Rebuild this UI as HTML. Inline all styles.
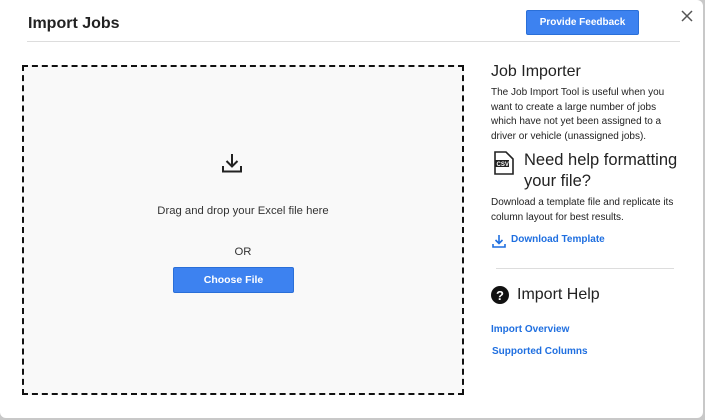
<!DOCTYPE html>
<html><head><style>
*{margin:0;padding:0;box-sizing:border-box}
body{width:705px;height:420px;background:#c8c8c8;font-family:"Liberation Sans",sans-serif;position:relative;overflow:hidden}
.m{position:absolute;left:0;top:0;width:703px;height:418px;background:#fff;border-radius:0 6px 6px 6px}
.a{position:absolute}
.t{left:28px;top:15px;font-size:16px;font-weight:bold;color:#222}
.hr{left:27px;top:41px;width:653px;height:1px;background:#ddd}
.fb{left:526px;top:10px;width:113px;height:25px;background:#3d82f0;border:1px solid #2a6fd8;border-radius:2px;color:#fff;font-size:10px;font-weight:bold;text-align:center;line-height:23px}
.x{left:680px;top:9px}
.dz{left:22px;top:65px;width:442px;height:330px;border:2px dashed #111;background:#f9f9f9}
.c{width:100%;text-align:center;font-size:11.3px;color:#333}
.cb{left:173px;top:267px;width:121px;height:26px;background:#3d82f0;border:1px solid #2a6fd8;border-radius:2px;color:#fff;font-size:10.5px;font-weight:bold;text-align:center;line-height:24px}
.p{font-size:10px;color:#222;line-height:14.5px;white-space:nowrap}
.lk{color:#1f6fe0;font-size:10px;font-weight:bold}
</style></head><body>
<div class="m">
<div class="a t">Import Jobs</div>
<div class="a hr"></div>
<div class="a fb">Provide Feedback</div>
<svg class="a x" width="14" height="14" viewBox="0 0 14 14"><path d="M2 2L12 12M12 2L2 12" stroke="#555" stroke-width="1.5"/></svg>
<div class="a dz"></div>
<svg class="a" style="left:221px;top:153px" width="22" height="20" viewBox="0 0 22 20"><path d="M11 1V13M5.5 8L11 13.5L16.5 8M2 13V18.5H20V13" stroke="#222" stroke-width="2" fill="none"/></svg>
<div class="a c" style="left:22px;width:442px;top:205px">Drag and drop your Excel file here</div>
<div class="a c" style="left:22px;width:442px;top:246px">OR</div>
<div class="a cb">Choose File</div>
<div class="a" style="left:491px;top:63px;font-size:16px;color:#222">Job Importer</div>
<div class="a p" style="left:491px;top:86px">The Job Import Tool is useful when you<br>want to create a large number of jobs<br>which have not yet been assigned to a<br>driver or vehicle (unassigned jobs).</div>
<svg class="a" style="left:494px;top:151px" width="20" height="24" viewBox="0 0 20 24"><path d="M1 1H12L19 8V23H1Z" fill="#fff" stroke="#222" stroke-width="1.6"/><rect x="1" y="9" width="14" height="7" fill="#222"/><text x="2.5" y="15" font-size="6" font-weight="bold" fill="#fff" font-family="Liberation Sans">CSV</text></svg>
<div class="a" style="left:524px;top:150px;font-size:16.5px;color:#222;line-height:21px">Need help formatting<br>your file?</div>
<div class="a p" style="left:491px;top:196px">Download a template file and replicate its<br>column layout for best results.</div>
<svg class="a" style="left:492px;top:234px" width="14" height="14" viewBox="0 0 14 14"><path d="M7 1V9M3.5 6L7 9.5L10.5 6M1 10V13H13V10" stroke="#1f6fe0" stroke-width="1.6" fill="none"/></svg>
<div class="a lk" style="left:511px;top:234px">Download Template</div>
<div class="a" style="left:496px;top:268px;width:178px;height:1px;background:#ddd"></div>
<svg class="a" style="left:491px;top:286px" width="18" height="18" viewBox="0 0 18 18"><circle cx="9" cy="9" r="9" fill="#111"/><text x="9" y="14" text-anchor="middle" font-size="13" font-weight="bold" fill="#fff" font-family="Liberation Sans">?</text></svg>
<div class="a" style="left:517px;top:286px;font-size:16px;color:#222">Import Help</div>
<div class="a lk" style="left:491px;top:324px">Import Overview</div>
<div class="a lk" style="left:492px;top:346px">Supported Columns</div>
</div>
</body></html>
